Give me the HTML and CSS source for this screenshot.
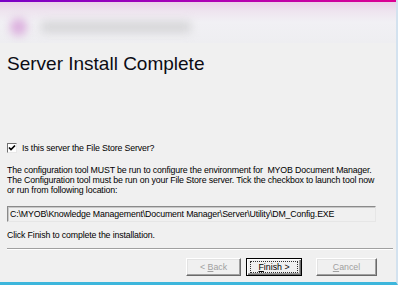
FILE: index.html
```html
<!DOCTYPE html>
<html>
<head>
<meta charset="utf-8">
<link rel="stylesheet" href="styles.css">
</head>
<body>
<div class="dlg">
  <div class="hdr">
    <div class="topbar"></div>
    <div class="hdr-body">
      <span class="blur-icon"></span>
      <span class="blur-text"></span>
    </div>
  </div>
  <div class="main">
    <h1 class="title">Server Install Complete</h1>
    <div class="chk">
      <span class="box"><svg width="8" height="8" viewBox="0 0 8 8"><path d="M1 3.5 L3 5.5 L7 1.5" fill="none" stroke="#000" stroke-width="1.7"/></svg></span>
      <span class="chk-label">Is this server the File Store Server?</span>
    </div>
    <p class="info">The configuration tool MUST be run to configure the environment for &nbsp;MYOB Document Manager.<br>The Configuration tool must be run on your File Store server. Tick the checkbox to launch tool now<br>or run from following location:</p>
    <div class="path">C:\MYOB\Knowledge Management\Document Manager\Server\Utility\DM_Config.EXE</div>
    <p class="note">Click Finish to complete the installation.</p>
  </div>
  <div class="sep"></div>
  <div class="btns">
    <button class="btn btn-back" disabled><span class="lbl">&lt; <u>B</u>ack</span></button>
    <button class="btn btn-finish"><span class="focus"><span class="lbl"><u>F</u>inish &gt;</span></span></button>
    <button class="btn btn-cancel" disabled><span class="lbl"><u>C</u>ancel</span></button>
  </div>
</div>
</body>
</html>
```

FILE: styles.css
```css
html, body {
  margin: 0;
  padding: 0;
  background: #f0f0f0;
}
.dlg {
  width: 398px;
  height: 285px;
  box-sizing: border-box;
  background: #f0f0f0;
  border-right: 2px solid #d3e2ef;
  border-bottom: 3px solid #3db6dc;
  display: flex;
  flex-direction: column;
  font-family: "Liberation Sans", Arial, sans-serif;
  font-size: 8.8px;
  letter-spacing: -0.15px;
  color: #000;
  overflow: hidden;
}
.dlg > * {
  flex-shrink: 0;
}
.hdr {
  height: 43px;
  display: flex;
  flex-direction: column;
}
.topbar {
  height: 2px;
  flex-shrink: 0;
  background: linear-gradient(90deg, #7a00c6, #b000b4 55%, #dc0092);
}
.hdr-body {
  flex: 1;
  background: linear-gradient(180deg, #ead0e8 0px, #eee4ef 9px, #f1f0f4 20px, #eeeef1 41px);
  display: flex;
  align-items: center;
  padding-left: 10px;
  padding-top: 8px;
  gap: 14px;
  overflow: hidden;
}
.blur-icon {
  width: 17px;
  height: 18px;
  border-radius: 50%;
  background: #dcb0de;
  filter: blur(4px);
}
.blur-text {
  width: 150px;
  height: 12px;
  background: #d2d2d4;
  filter: blur(5px);
  opacity: 0.85;
}
.main {
  padding-left: 7px;
  padding-right: 20px;
  white-space: nowrap;
}
.title {
  margin: 10px 0 0 0;
  font-size: 19px;
  font-weight: normal;
  letter-spacing: 0;
  line-height: 22px;
  color: #0c0c14;
}
.chk {
  margin-top: 68px;
  height: 10px;
  display: flex;
  align-items: center;
  gap: 5px;
  line-height: 10px;
}
.box {
  width: 10px;
  height: 10px;
  box-sizing: border-box;
  border: 1px solid;
  border-color: #707070 #e8e8e8 #e8e8e8 #707070;
  background: #fff;
  display: flex;
  align-items: center;
  justify-content: center;
}
.box svg {
  display: block;
}
.info {
  margin: 12px 0 0 0;
  line-height: 10px;
}
.path {
  margin-top: 11px;
  height: 16px;
  box-sizing: border-box;
  width: 369px;
  border: 1px solid;
  border-color: #8a8a8a #e6e6e6 #e6e6e6 #8a8a8a;
  box-shadow: inset 1px 1px #c8c8c8;
  padding-left: 2px;
  line-height: 14px;
}
.note {
  margin: 8px 0 0 0;
  line-height: 10px;
}
.sep {
  margin: 8px 3px 0 7px;
  height: 1px;
  background: #a0a0a0;
  border-bottom: 1px solid #ffffff;
}
.btns {
  margin-top: 8px;
  display: flex;
  justify-content: flex-end;
  padding-right: 19px;
}
.btn {
  height: 18px;
  box-sizing: border-box;
  padding: 0;
  margin: 0;
  background: #f0f0f0;
  font-family: "Liberation Sans", Arial, sans-serif;
  font-size: 8.8px;
  letter-spacing: 0;
  color: #000;
  border: 1px solid;
  border-color: #ffffff #6a6a6a #6a6a6a #ffffff;
  box-shadow: inset -1px -1px #a0a0a0, inset 1px 1px #e3e3e3;
  display: flex;
  align-items: center;
  justify-content: center;
}
.lbl {
  white-space: pre;
}
.btn:disabled {
  color: #a0a0a0;
}
.btn-back {
  width: 55px;
}
.btn-finish {
  width: 56px;
  margin-left: 5px;
  border: 1px solid #000;
  box-shadow: inset 1px 1px #fff, inset -1px -1px #6a6a6a, inset -2px -2px #a0a0a0;
}
.focus {
  display: flex;
  align-items: center;
  justify-content: center;
  width: 46px;
  height: 10px;
  border: 1px dotted #303030;
}
.btn-cancel {
  width: 61px;
  margin-left: 14px;
}
```
